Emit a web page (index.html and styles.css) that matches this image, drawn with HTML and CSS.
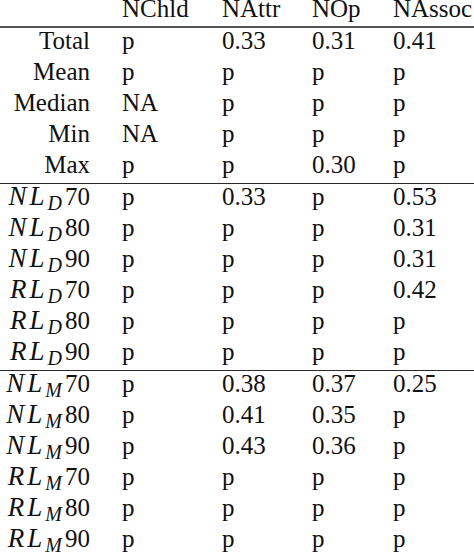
FILE: index.html
```
<!DOCTYPE html>
<html>
<head>
<meta charset="utf-8">
<link rel="stylesheet" href="styles.css">
</head>
<body>
<div class="table">
  <div class="row head">
    <div class="lab"></div><div>NChld</div><div>NAttr</div><div>NOp</div><div>NAssoc</div>
  </div>
  <div class="group first">
    <div class="row"><div class="lab">Total</div><div>p</div><div>0.33</div><div>0.31</div><div>0.41</div></div>
    <div class="row"><div class="lab">Mean</div><div>p</div><div>p</div><div>p</div><div>p</div></div>
    <div class="row"><div class="lab">Median</div><div>NA</div><div>p</div><div>p</div><div>p</div></div>
    <div class="row"><div class="lab">Min</div><div>NA</div><div>p</div><div>p</div><div>p</div></div>
    <div class="row"><div class="lab">Max</div><div>p</div><div>p</div><div>0.30</div><div>p</div></div>
  </div>
  <div class="group">
    <div class="row"><div class="lab"><span class="mi">NL</span><span class="sub">D</span>70</div><div>p</div><div>0.33</div><div>p</div><div>0.53</div></div>
    <div class="row"><div class="lab"><span class="mi">NL</span><span class="sub">D</span>80</div><div>p</div><div>p</div><div>p</div><div>0.31</div></div>
    <div class="row"><div class="lab"><span class="mi">NL</span><span class="sub">D</span>90</div><div>p</div><div>p</div><div>p</div><div>0.31</div></div>
    <div class="row"><div class="lab"><span class="mi">RL</span><span class="sub">D</span>70</div><div>p</div><div>p</div><div>p</div><div>0.42</div></div>
    <div class="row"><div class="lab"><span class="mi">RL</span><span class="sub">D</span>80</div><div>p</div><div>p</div><div>p</div><div>p</div></div>
    <div class="row"><div class="lab"><span class="mi">RL</span><span class="sub">D</span>90</div><div>p</div><div>p</div><div>p</div><div>p</div></div>
  </div>
  <div class="group">
    <div class="row"><div class="lab"><span class="mi">NL</span><span class="sub">M</span>70</div><div>p</div><div>0.38</div><div>0.37</div><div>0.25</div></div>
    <div class="row"><div class="lab"><span class="mi">NL</span><span class="sub">M</span>80</div><div>p</div><div>0.41</div><div>0.35</div><div>p</div></div>
    <div class="row"><div class="lab"><span class="mi">NL</span><span class="sub">M</span>90</div><div>p</div><div>0.43</div><div>0.36</div><div>p</div></div>
    <div class="row"><div class="lab"><span class="mi">RL</span><span class="sub">M</span>70</div><div>p</div><div>p</div><div>p</div><div>p</div></div>
    <div class="row"><div class="lab"><span class="mi">RL</span><span class="sub">M</span>80</div><div>p</div><div>p</div><div>p</div><div>p</div></div>
    <div class="row"><div class="lab"><span class="mi">RL</span><span class="sub">M</span>90</div><div>p</div><div>p</div><div>p</div><div>p</div></div>
  </div>
</div>
</body>
</html>
```
FILE: styles.css
```
html, body {
  margin: 0;
  padding: 0;
  background: #fff;
  overflow: hidden;
}
body {
  width: 474px;
  height: 555px;
  font-family: "Liberation Serif", "Times New Roman", serif;
  font-size: 25px;
  color: #111;
}
.table {
  width: 474px;
  overflow: hidden;
}
.row {
  display: grid;
  grid-template-columns: 122px 100px 90px 81px 81px;
  height: 31px;
  line-height: 25px;
  white-space: nowrap;
}
.row.head {
  height: 26px;
  line-height: 17px;
}
.lab {
  text-align: right;
  padding-right: 32px;
}
.group {
  border-top: 1px solid #2a2a2a;
}
.group.first {
  border-top: 2px solid #555;
}
.mi {
  font-style: italic;
  font-size: 27px;
  letter-spacing: 3px;
}
.sub {
  font-style: italic;
  font-size: 20px;
  position: relative;
  top: 5px;
  margin-right: 3px;
}
```
